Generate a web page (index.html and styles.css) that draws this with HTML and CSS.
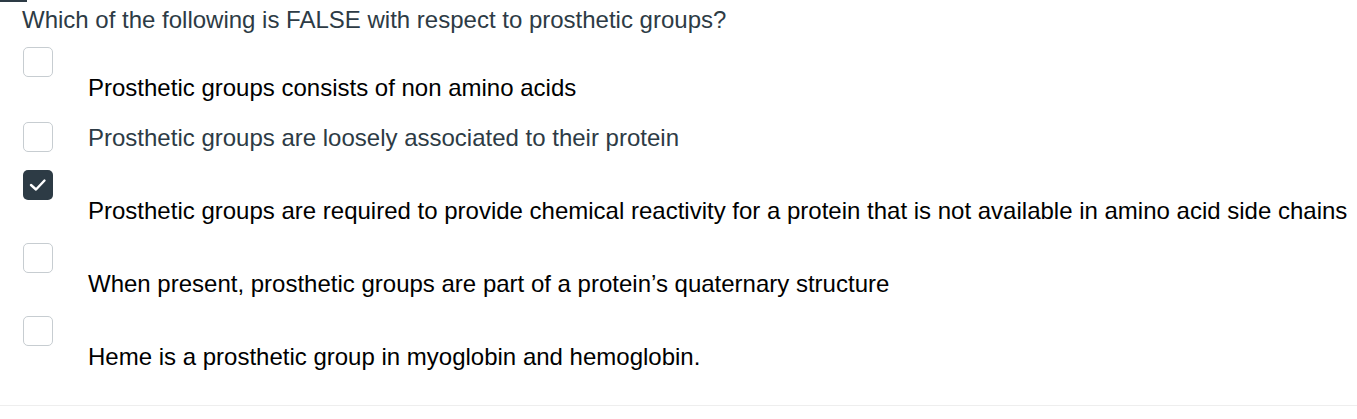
FILE: index.html
```html
<!DOCTYPE html>
<html>
<head>
<meta charset="utf-8">
<link rel="stylesheet" href="styles.css">
</head>
<body>
<div class="topbar"></div>
<div class="question">
  <p class="prompt">Which of the following is FALSE with respect to prosthetic groups?</p>
  <div class="answers">
    <div class="answer stacked">
      <span class="box"></span>
      <span class="label">Prosthetic groups consists of non amino acids</span>
    </div>
    <div class="answer inline">
      <span class="box"></span>
      <span class="label slate">Prosthetic groups are loosely associated to their protein</span>
    </div>
    <div class="answer stacked">
      <span class="box checked"><svg width="30" height="30" viewBox="0 0 30 30"><polyline points="8,15 13,19.5 21.5,10.5" fill="none" stroke="#fff" stroke-width="2.4" stroke-linecap="round" stroke-linejoin="round"/></svg></span>
      <span class="label">Prosthetic groups are required to provide chemical reactivity for a protein that is not available in amino acid side chains</span>
    </div>
    <div class="answer stacked">
      <span class="box"></span>
      <span class="label">When present, prosthetic groups are part of a protein’s quaternary structure</span>
    </div>
    <div class="answer stacked">
      <span class="box"></span>
      <span class="label">Heme is a prosthetic group in myoglobin and hemoglobin.</span>
    </div>
  </div>
</div>
<div class="footer-line"></div>
</body>
</html>
```
FILE: styles.css
```css
html, body {
  margin: 0;
  padding: 0;
  background: #ffffff;
  font-family: "Liberation Sans", Arial, sans-serif;
}
.topbar {
  width: 27px;
  height: 2px;
  background: #2d3b45;
}
.question {
  padding: 0 0 0 22px;
}
.prompt {
  margin: 0;
  padding-top: 4px;
  font-size: 24px;
  line-height: 27px;
  color: #2d3b45;
}
.answers {
  display: flex;
  flex-direction: column;
  gap: 19px;
  margin-top: 14px;
  padding-left: 1px;
}
.answer {
  display: flex;
  gap: 35px;
}
.answer.stacked {
  align-items: flex-start;
}
.answer.inline {
  align-items: center;
  margin-top: 2px;
  margin-bottom: -1px;
}
.box {
  flex: none;
  width: 28px;
  height: 28px;
  border: 1px solid #c7cdd1;
  border-radius: 5px;
  background: #fff;
  box-sizing: content-box;
}
.box.checked {
  width: 30px;
  height: 30px;
  border: none;
  background: #2d3b45;
}
.box svg {
  display: block;
}
.label {
  font-size: 24px;
  line-height: 27px;
  color: #000;
  white-space: nowrap;
}
.stacked .label {
  margin-top: 27px;
}
.label.slate {
  color: #2d3b45;
}
.footer-line {
  margin-top: 35px;
  height: 1px;
  background: #eeeeee;
}
```
